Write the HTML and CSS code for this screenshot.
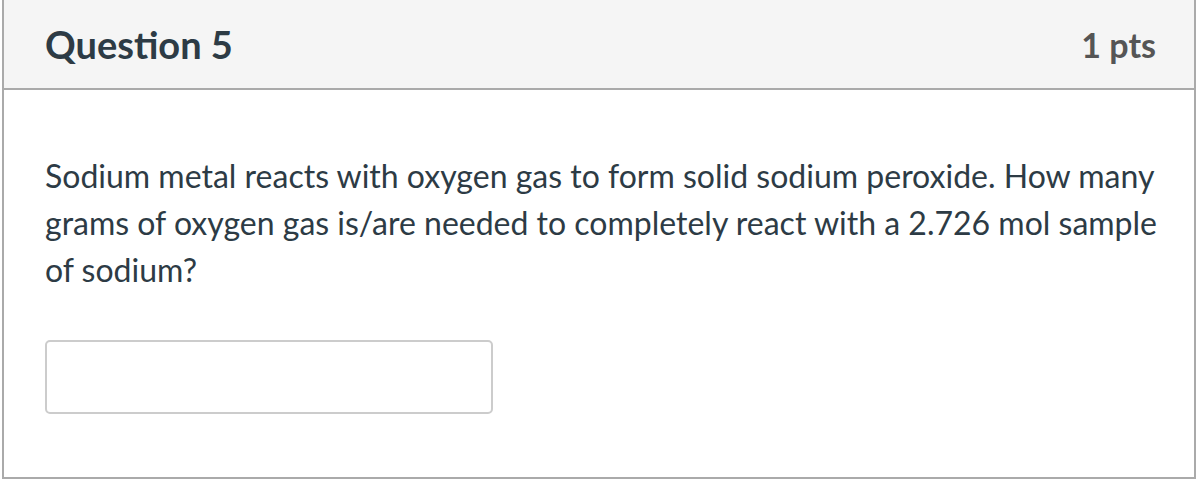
FILE: index.html
```html
<!DOCTYPE html>
<html>
<head>
<meta charset="utf-8">
<link rel="stylesheet" href="styles.css">
</head>
<body>
<div class="question">
  <div class="header">
    <span class="title">Question 5</span>
    <span class="points">1 pts</span>
  </div>
  <div class="content">
    <p class="text">Sodium metal reacts with oxygen gas to form solid sodium peroxide. How many grams of oxygen gas is/are needed to completely react with a 2.726 mol sample of sodium?</p>
    <input class="answer" type="text">
  </div>
</div>
</body>
</html>
```

FILE: styles.css
```css
html, body {
  margin: 0;
  padding: 0;
  background: #ffffff;
}
body {
  font-family: Lato, "Liberation Sans", sans-serif;
  color: #2d3b45;
}
.question {
  margin-left: 2px;
  width: 1190px;
  height: 477px;
  border: 2px solid #aaaaaa;
  border-top: none;
  box-sizing: content-box;
}
.header {
  background: #f5f5f5;
  border-bottom: 2px solid #aaaaaa;
  display: flex;
  align-items: center;
  justify-content: space-between;
  padding: 0 38px 0 41px;
  box-sizing: border-box;
  height: 90px;
}
.title {
  font-size: 38px;
  font-weight: 700;
  color: #2d3b45;
}
.points {
  font-size: 34px;
  font-weight: 700;
  color: #555555;
}
.content {
  padding: 0 28px 0 41px;
}
.text {
  margin: 62px 0 0 0;
  font-size: 32px;
  line-height: 47px;
}
.answer {
  display: block;
  margin-top: 47px;
  width: 448px;
  height: 74px;
  box-sizing: border-box;
  border: 2px solid #cccccc;
  border-radius: 5px;
  background: #fff;
  margin-left: 0;
}
```
